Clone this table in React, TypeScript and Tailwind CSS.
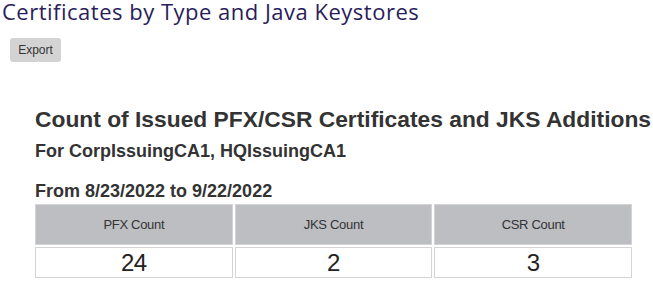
export default function App() {
  const counts = [
    { label: 'PFX Count', value: 24 },
    { label: 'JKS Count', value: 2 },
    { label: 'CSR Count', value: 3 },
  ];

  return (
    <div className="w-[653px] h-[283px] overflow-hidden bg-white">
      <h1 className="text-[22px] leading-[30px] -mt-[4px] tracking-[0.5px] text-[#291d5c] pl-[2px] whitespace-nowrap font-['Open_Sans',sans-serif]">
        Certificates by Type and Java Keystores
      </h1>
      <button className="ml-[10px] mt-[12px] h-[24px] w-[51px] rounded-[3px] bg-[#d3d3d3] text-[12px] text-[#333] font-['Liberation_Sans',Arial,sans-serif]">
        Export
      </button>

      <div className="pl-[35px] mt-[44px] font-['Liberation_Sans',Arial,sans-serif] text-[#333]">
        <h2 className="text-[22.8px] leading-[26px] font-bold whitespace-nowrap">
          Count of Issued PFX/CSR Certificates and JKS Additions
        </h2>
        <h3 className="mt-[9px] text-[18px] leading-[20px] font-bold">
          For CorpIssuingCA1, HQIssuingCA1
        </h3>
        <h3 className="mt-[20px] text-[18px] leading-[20px] font-bold">
          From 8/23/2022 to 9/22/2022
        </h3>
        <table className="border-separate border-spacing-[2px] -ml-[2px] mt-[1px] w-[601px] table-fixed">
          <tbody>
            <tr>
              {counts.map((c) => (
                <td
                  key={c.label}
                  className="h-[41px] border border-[#d4d4d4] bg-[#bdbec2] text-center text-[13px] tracking-[-0.3px] text-[#333]"
                >
                  {c.label}
                </td>
              ))}
            </tr>
            <tr>
              {counts.map((c) => (
                <td
                  key={c.label}
                  className="h-[31px] border border-[#d4d4d4] bg-white text-center text-[24px] leading-[26px] tracking-[-0.5px] text-[#222]"
                >
                  {c.value}
                </td>
              ))}
            </tr>
          </tbody>
        </table>
      </div>
    </div>
  );
}
